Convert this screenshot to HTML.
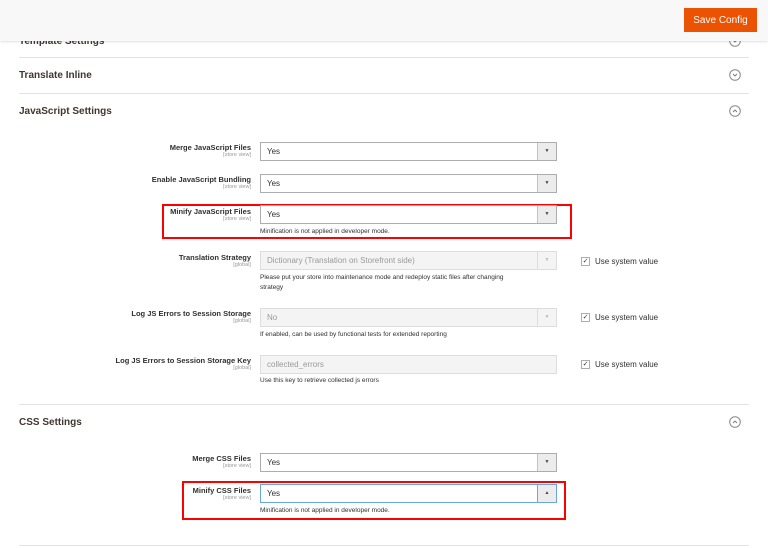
<!DOCTYPE html>
<html><head><meta charset="utf-8"><style>
*{margin:0;padding:0;box-sizing:border-box}
body{width:768px;height:548px;overflow:hidden;background:#fff;font-family:"Liberation Sans",sans-serif;position:relative;color:#303030}
.a{position:absolute}
.hdr{left:0;top:0;width:768px;height:41px;background:#f8f8f8;box-shadow:0 1px 2px rgba(0,0,0,.12);z-index:5}
.btn{left:684px;top:8px;width:73px;height:24px;background:#eb5202;color:#fff;font-size:10px;display:flex;align-items:center;justify-content:center}
.line{left:19px;width:730px;height:1px;background:#e3e3e3}
.sec{left:19px;font-size:10px;font-weight:bold;color:#41362f}
.ic{left:729px;width:12px;height:12px}
.lab{right:517px;text-align:right;font-size:7.5px;font-weight:bold;color:#303030;white-space:nowrap}
.lab small{display:block;font-size:5.5px;font-weight:normal;color:#999;line-height:7px}
.sel{left:260px;width:297px;height:19px;border:1px solid #adadad;background:#fff;font-size:8px;line-height:17px;padding-left:6px;color:#303030}
.sel b{position:absolute;right:0;top:0;width:19px;height:17px;background:#ececec;border-left:1px solid #c2c2c2;font-size:5px;text-align:center;color:#444}
.dis{background:#f4f4f4;border-color:#ddd;color:#999}
.dis b{background:#f4f4f4;border-color:#ddd;color:#bbb}
.note{left:260px;font-size:6.5px;color:#303030;line-height:10px}
.cb{left:581px;width:9px;height:9px;border:1px solid #adadad;font-size:7px;line-height:7px;text-align:center}
.sv{left:595px;font-size:8px}
.red{border:2px solid #f00}
</style></head><body>
<div class="a hdr"><div class="a btn">Save Config</div></div>
<div class="a sec" style="top:36px">Template Settings</div>
<svg class="a ic" style="top:35px" viewBox="0 0 12 12"><circle cx="6" cy="6" r="5.3" fill="none" stroke="#888" stroke-width="1"/><path d="M4 5l2 2 2-2" fill="none" stroke="#777" stroke-width="0.9"/></svg>
<div class="a line" style="top:57px"></div>
<div class="a sec" style="top:70px">Translate Inline</div>
<svg class="a ic" style="top:69px" viewBox="0 0 12 12"><circle cx="6" cy="6" r="5.3" fill="none" stroke="#888" stroke-width="1"/><path d="M4 5l2 2 2-2" fill="none" stroke="#777" stroke-width="0.9"/></svg>
<div class="a line" style="top:93px"></div>
<div class="a sec" style="top:106px">JavaScript Settings</div>
<svg class="a ic" style="top:105px" viewBox="0 0 12 12"><circle cx="6" cy="6" r="5.3" fill="none" stroke="#888" stroke-width="1"/><path d="M4 7l2-2 2 2" fill="none" stroke="#777" stroke-width="0.9"/></svg>

<div class="a lab" style="top:143px">Merge JavaScript Files<small>[store view]</small></div>
<div class="a sel" style="top:142px">Yes<b>▼</b></div>
<div class="a lab" style="top:175px">Enable JavaScript Bundling<small>[store view]</small></div>
<div class="a sel" style="top:174px">Yes<b>▼</b></div>
<div class="a red" style="left:162px;top:204px;width:410px;height:35px"></div>
<div class="a lab" style="top:207px">Minify JavaScript Files<small>[store view]</small></div>
<div class="a sel" style="top:205px">Yes<b>▼</b></div>
<div class="a note" style="top:227px">Minification is not applied in developer mode.</div>

<div class="a lab" style="top:253px">Translation Strategy<small>[global]</small></div>
<div class="a sel dis" style="top:251px">Dictionary (Translation on Storefront side)<b>▼</b></div>
<div class="a note" style="top:273px">Please put your store into maintenance mode and redeploy static files after changing<br>strategy</div>
<div class="a cb" style="top:257px">✓</div><div class="a sv" style="top:257px">Use system value</div>

<div class="a lab" style="top:309px">Log JS Errors to Session Storage<small>[global]</small></div>
<div class="a sel dis" style="top:308px">No<b>▼</b></div>
<div class="a note" style="top:330px">If enabled, can be used by functional tests for extended reporting</div>
<div class="a cb" style="top:313px">✓</div><div class="a sv" style="top:313px">Use system value</div>

<div class="a lab" style="top:356px">Log JS Errors to Session Storage Key<small>[global]</small></div>
<div class="a sel dis" style="top:355px">collected_errors</div>
<div class="a note" style="top:376px">Use this key to retrieve collected js errors</div>
<div class="a cb" style="top:360px">✓</div><div class="a sv" style="top:360px">Use system value</div>

<div class="a line" style="top:404px"></div>
<div class="a sec" style="top:417px">CSS Settings</div>
<svg class="a ic" style="top:416px" viewBox="0 0 12 12"><circle cx="6" cy="6" r="5.3" fill="none" stroke="#888" stroke-width="1"/><path d="M4 7l2-2 2 2" fill="none" stroke="#777" stroke-width="0.9"/></svg>

<div class="a lab" style="top:454px">Merge CSS Files<small>[store view]</small></div>
<div class="a sel" style="top:453px">Yes<b>▼</b></div>
<div class="a red" style="left:182px;top:481px;width:384px;height:39px"></div>
<div class="a lab" style="top:486px">Minify CSS Files<small>[store view]</small></div>
<div class="a sel" style="top:484px;border-color:#68a8e0">Yes<b style="border-color:#68a8e0">▲</b></div>
<div class="a note" style="top:506px">Minification is not applied in developer mode.</div>
<div class="a line" style="top:545px"></div>
</body></html>
